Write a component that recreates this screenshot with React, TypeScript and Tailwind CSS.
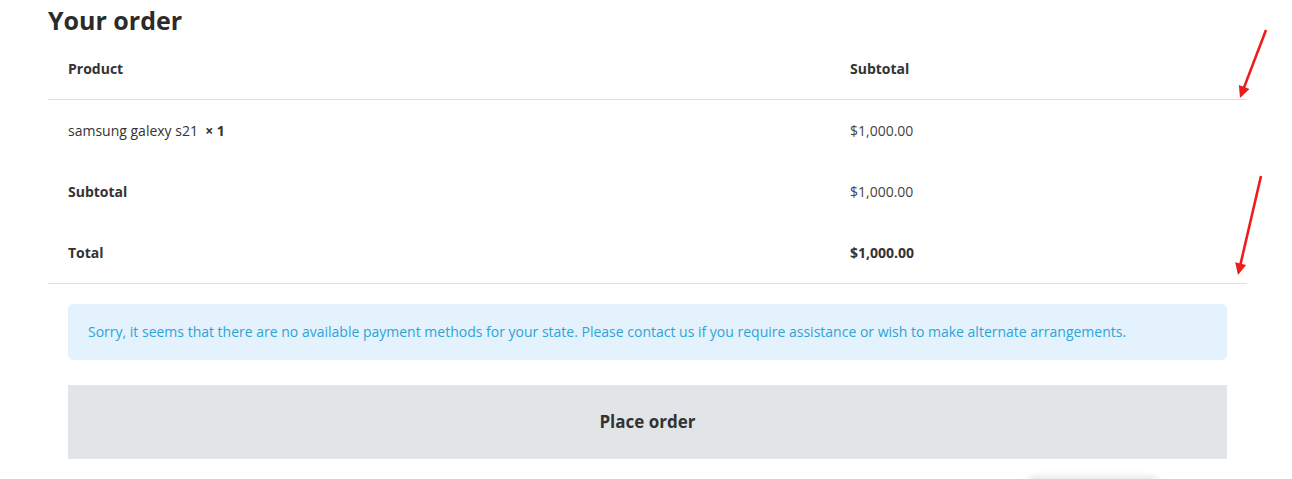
const font = { fontFamily: '"Open Sans", "Noto Sans", sans-serif' };

function Arrow({ x1, y1, x2, y2 }: { x1: number; y1: number; x2: number; y2: number }) {
  const ang = Math.atan2(y2 - y1, x2 - x1);
  const len = 13;
  const w = 0.45;
  const ax = x2 - len * Math.cos(ang - w);
  const ay = y2 - len * Math.sin(ang - w);
  const bx = x2 - len * Math.cos(ang + w);
  const by = y2 - len * Math.sin(ang + w);
  return (
    <g>
      <line x1={x1} y1={y1} x2={x2 - 6 * Math.cos(ang)} y2={y2 - 6 * Math.sin(ang)} stroke="#ee1c1c" strokeWidth="2.6" />
      <polygon points={`${x2},${y2} ${ax},${ay} ${bx},${by}`} fill="#ee1c1c" />
    </g>
  );
}

export default function App() {
  return (
    <div className="relative w-[1292px] h-[479px] overflow-hidden bg-white text-[#333]" style={font}>
      <div className="pl-[48px] pr-[45px]">
        <h2 className="text-[25px] font-bold leading-[40px] text-[#2b2b2b]">Your order</h2>
        <table className="w-full text-[14px] border-collapse">
          <thead>
            <tr className="border-b border-[#dedede]">
              <th className="w-[782px] h-[59px] pl-[20px] pb-[2px] text-left font-bold">Product</th>
              <th className="h-[59px] pl-[20px] pb-[2px] text-left font-bold">Subtotal</th>
            </tr>
          </thead>
          <tbody>
            <tr>
              <td className="h-[62px] pl-[20px]">
                samsung galexy s21&nbsp; <strong className="font-bold">× 1</strong>
              </td>
              <td className="pl-[20px] text-[#444]">$1,000.00</td>
            </tr>
          </tbody>
          <tfoot>
            <tr>
              <th className="h-[61px] pl-[20px] text-left font-bold">Subtotal</th>
              <td className="pl-[20px] text-[#444]">$1,000.00</td>
            </tr>
            <tr className="border-b border-[#dedede]">
              <th className="h-[61px] pl-[20px] text-left font-bold">Total</th>
              <td className="pl-[20px] font-bold">$1,000.00</td>
            </tr>
          </tfoot>
        </table>
        <div className="px-[20px] pt-[20px]">
          <div className="rounded-[5px] bg-[#e3f2fd] px-[20px] py-[18px] text-[14px] leading-[20px] text-[#2ea3d8]">
            Sorry, it seems that there are no available payment methods for your state. Please contact us if you require assistance or wish to make alternate arrangements.
          </div>
          <button className="mt-[25px] w-full h-[74px] bg-[#e2e5e8] text-[17px] font-bold text-[#333]">
            Place order
          </button>
        </div>
      </div>
      <div className="absolute left-[1028px] top-[476px] w-[130px] h-[10px] rounded-full bg-[#e8e8e8] blur-[3px]" />
      <svg className="absolute left-0 top-0 pointer-events-none" width="1292" height="479">
        <Arrow x1={1266} y1={30} x2={1240} y2={98} />
        <Arrow x1={1261} y1={176} x2={1238} y2={275} />
      </svg>
    </div>
  );
}
